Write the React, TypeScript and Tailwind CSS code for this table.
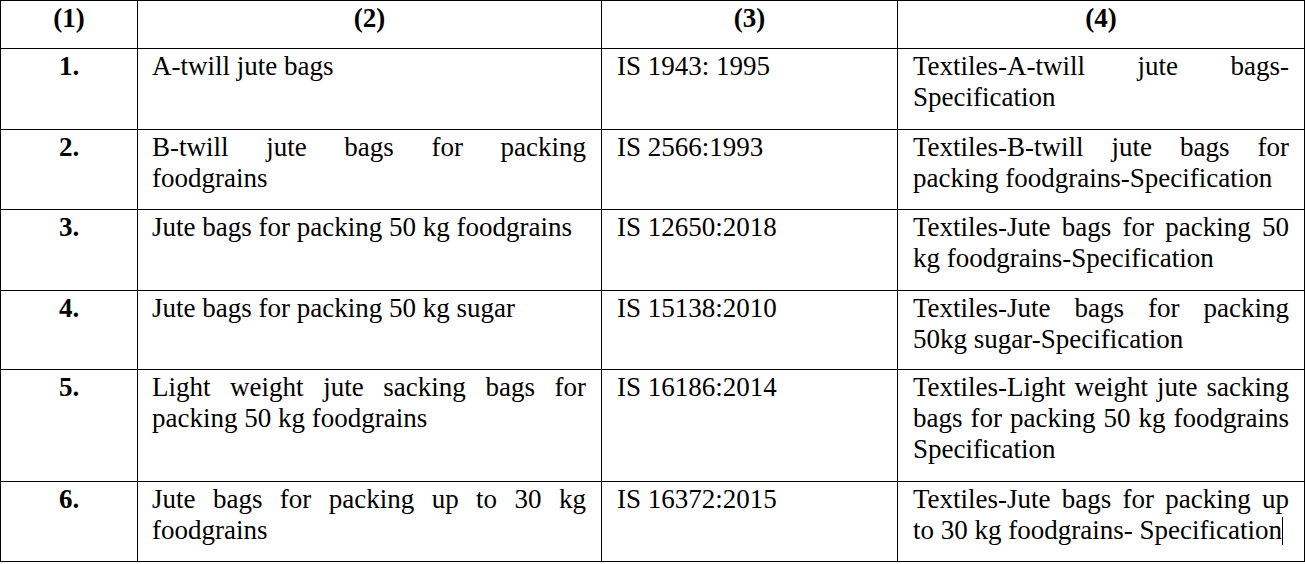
import React from "react";

type Row = {
  no: string;
  item: React.ReactNode;
  standard: string;
  title: string;
  h: string;
  cursor?: boolean;
};

const rows: Row[] = [
  { no: "1.", item: "A-twill jute bags", standard: "IS 1943: 1995", title: "Textiles-A-twill jute bags-Specification", h: "h-[81px]" },
  {
    no: "2.",
    // forced break like the source document, first line stays justified
    item: (
      <>
        <span className="block [text-align-last:justify]">B-twill jute bags for packing</span>
        <span className="block">foodgrains</span>
      </>
    ),
    standard: "IS 2566:1993",
    title: "Textiles-B-twill jute bags for packing foodgrains-Specification",
    h: "h-[80px]",
  },
  { no: "3.", item: "Jute bags for packing 50 kg foodgrains", standard: "IS 12650:2018", title: "Textiles-Jute bags for packing 50 kg foodgrains-Specification", h: "h-[81px]" },
  { no: "4.", item: "Jute bags for packing 50 kg sugar", standard: "IS 15138:2010", title: "Textiles-Jute bags for packing 50kg sugar-Specification", h: "h-[79px]" },
  { no: "5.", item: "Light weight jute sacking bags for packing 50 kg foodgrains", standard: "IS 16186:2014", title: "Textiles-Light weight jute sacking bags for packing 50 kg foodgrains Specification", h: "h-[112px]" },
  { no: "6.", item: "Jute bags for packing up to 30 kg foodgrains", standard: "IS 16372:2015", title: "Textiles-Jute bags for packing up to 30 kg foodgrains- Specification", h: "h-[80px]", cursor: true },
];

const cell = "border border-black align-top px-[15px] pt-[2px] pb-0";

export default function App() {
  return (
    <div className="w-[1305px] h-[564px] bg-white text-black font-['Liberation_Serif','Times_New_Roman',serif] text-[27px] leading-[31px]">
      <table className="table-fixed border-collapse w-[1304px]">
        <colgroup>
          <col className="w-[137px]" />
          <col className="w-[464px]" />
          <col className="w-[296px]" />
          <col className="w-[407px]" />
        </colgroup>
        <thead>
          <tr>
            {["(1)", "(2)", "(3)", "(4)"].map((h) => (
              <th key={h} className={`${cell} h-[48px] text-center font-bold`}>
                {h}
              </th>
            ))}
          </tr>
        </thead>
        <tbody>
          {rows.map((r) => (
            <tr key={r.no}>
              <td className={`${cell} ${r.h} text-center font-bold`}>{r.no}</td>
              <td className={`${cell} pl-[14px] text-justify`}>{r.item}</td>
              <td className={`${cell} text-left`}>{r.standard}</td>
              <td className={`${cell} text-justify`}>
                {r.title}
                {r.cursor && <span className="inline-block w-px h-[28px] bg-black align-[-6px]" />}
              </td>
            </tr>
          ))}
        </tbody>
      </table>
    </div>
  );
}
